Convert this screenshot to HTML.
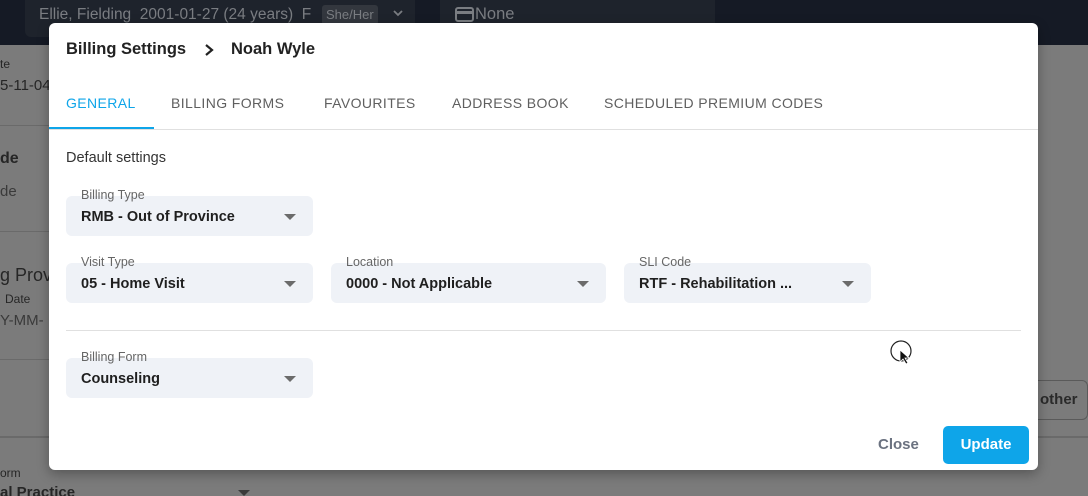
<!DOCTYPE html>
<html><head><meta charset="utf-8"><style>
*{box-sizing:border-box;margin:0;padding:0}
html,body{width:1088px;height:496px;overflow:hidden}
body{background:#7b7b7b;font-family:"Liberation Sans",Arial,sans-serif;position:relative}
.abs{position:absolute;white-space:nowrap}
.bg{color:#262626}
.dlg{position:absolute;left:49px;top:23px;width:989px;height:447px;background:#fff;border-radius:6px;box-shadow:0 4px 12px rgba(0,0,0,.3)}
.tab{position:absolute;top:72px;font-size:14px;letter-spacing:.4px;color:#5f5f5f}
.fld{position:absolute;background:#eff2f7;border-radius:6px;height:40px}
.fld .lb{position:absolute;left:15px;top:-8px;font-size:12.5px;color:#666}
.fld .v{position:absolute;left:15px;top:13px;font-size:14.5px;color:#1f1f1f;font-weight:bold;letter-spacing:0}
.fld .ar{position:absolute;right:17px;top:18px;width:0;height:0;border-left:6px solid transparent;border-right:6px solid transparent;border-top:6px solid #6b6b6b}
</style></head><body>
<div class="abs" style="left:0;top:0;width:1088px;height:45px;background:#151a25"></div>
<div class="abs" style="left:25px;top:0;width:390px;height:37px;background:#1e232c;border-radius:0 0 6px 6px"></div>
<div class="abs" style="left:440px;top:0;width:275px;height:37px;background:#1e232c;border-radius:0 0 6px 6px"></div>
<div class="abs" style="left:39px;top:6px;font-size:15.5px;color:#7a7d82">Ellie, Fielding&nbsp; 2001-01-27 (24 years)&nbsp; F</div>
<div class="abs" style="left:322px;top:5px;height:20px;padding:2px 4px;background:#33373e;border-radius:3px;font-size:13px;color:#7a7d82">She/Her</div>
<svg class="abs" style="left:392px;top:8px" width="12" height="10"><path d="M2 3l4 4 4-4" fill="none" stroke="#7a7d82" stroke-width="1.8"/></svg>
<svg class="abs" style="left:455px;top:7px" width="19" height="15"><rect x="1" y="1" width="17" height="13" rx="2" fill="none" stroke="#7a7d82" stroke-width="2"/><rect x="1" y="4" width="17" height="3" fill="#7a7d82"/></svg>
<div class="abs" style="left:475px;top:5px;font-size:16.5px;color:#7a7d82">None</div>
<div class="abs bg" style="left:0;top:57px;font-size:12px">te</div>
<div class="abs bg" style="left:0;top:77px;font-size:15px">5-11-04</div>
<div class="abs" style="left:0;top:125px;width:49px;height:1px;background:#6a6a6a"></div>
<div class="abs bg" style="left:0;top:150px;font-size:16px;font-weight:bold">de</div>
<div class="abs" style="left:0;top:183px;font-size:15px;color:#3a3a3a">de</div>
<div class="abs" style="left:0;top:231px;width:49px;height:1px;background:#6a6a6a"></div>
<div class="abs bg" style="left:0;top:265px;font-size:18px">g Prov</div>
<div class="abs bg" style="left:5px;top:292px;font-size:12px">Date</div>
<div class="abs bg" style="left:0;top:312px;font-size:15px;color:#3a3a3a">Y-MM-</div>
<div class="abs" style="left:0;top:359px;width:49px;height:1px;background:#6a6a6a"></div>
<div class="abs" style="left:1038px;top:380px;width:50px;height:40px;border:1px solid #5a5a5a;border-left:none;border-radius:0 6px 6px 0"></div>
<div class="abs bg" style="left:1040px;top:391px;font-size:15px;font-weight:bold;color:#2a2a2a">other</div>
<div class="abs" style="left:0;top:436px;width:1088px;height:2px;background:#6a6a6a"></div>
<div class="abs bg" style="left:0;top:466px;font-size:12px">orm</div>
<div class="abs bg" style="left:0;top:484px;font-size:15px;font-weight:bold">al Practice</div>
<div class="abs" style="left:238px;top:490px;border-left:6px solid transparent;border-right:6px solid transparent;border-top:6px solid #3a3a3a"></div>

<div class="dlg">
 <div class="abs" style="left:17px;top:17px;font-size:16.5px;color:#222;font-weight:bold">Billing Settings</div>
 <svg class="abs" style="left:154px;top:20px" width="12" height="14"><path d="M3 2l6 5-6 5" fill="none" stroke="#222" stroke-width="2.2"/></svg>
 <div class="abs" style="left:182px;top:17px;font-size:16.5px;color:#222;font-weight:bold">Noah Wyle</div>
 <div class="tab" style="left:17px;color:#0ea5e9">GENERAL</div>
 <div class="tab" style="left:122px">BILLING FORMS</div>
 <div class="tab" style="left:275px">FAVOURITES</div>
 <div class="tab" style="left:403px">ADDRESS BOOK</div>
 <div class="tab" style="left:555px">SCHEDULED PREMIUM CODES</div>
 <div class="abs" style="left:0;top:104px;width:105px;height:3px;background:#0ea5e9"></div>
 <div class="abs" style="left:0;top:106px;width:989px;height:1px;background:#e0e0e0"></div>
 <div class="abs" style="left:17px;top:127px;font-size:14.5px;color:#333">Default settings</div>
 <div class="fld" style="left:17px;top:173px;width:247px"><span class="lb">Billing Type</span><span class="v">RMB - Out of Province</span><span class="ar"></span></div>
 <div class="fld" style="left:17px;top:240px;width:247px"><span class="lb">Visit Type</span><span class="v">05 - Home Visit</span><span class="ar"></span></div>
 <div class="fld" style="left:282px;top:240px;width:275px"><span class="lb">Location</span><span class="v">0000 - Not Applicable</span><span class="ar"></span></div>
 <div class="fld" style="left:575px;top:240px;width:247px"><span class="lb">SLI Code</span><span class="v">RTF - Rehabilitation ...</span><span class="ar"></span></div>
 <div class="abs" style="left:17px;top:307px;width:955px;height:1px;background:#e0e0e0"></div>
 <div class="fld" style="left:17px;top:335px;width:247px"><span class="lb">Billing Form</span><span class="v">Counseling</span><span class="ar"></span></div>
 <svg class="abs" style="left:841px;top:317px" width="24" height="28"><circle cx="11" cy="11" r="10" fill="#fff" stroke="#222" stroke-width="1.2"/><path d="M10 10l0 12 3-3 3 5 2-1-3-5 4 0z" fill="#111" stroke="#fff" stroke-width=".8"/></svg>
 <div class="abs" style="left:829px;top:413px;font-size:15px;color:#6b7280;font-weight:bold">Close</div>
 <div class="abs" style="left:894px;top:403px;width:86px;height:38px;background:#0ea5e9;border-radius:5px;color:#fff;font-size:15px;font-weight:bold;text-align:center;line-height:38px">Update</div>
</div>
</body></html>
